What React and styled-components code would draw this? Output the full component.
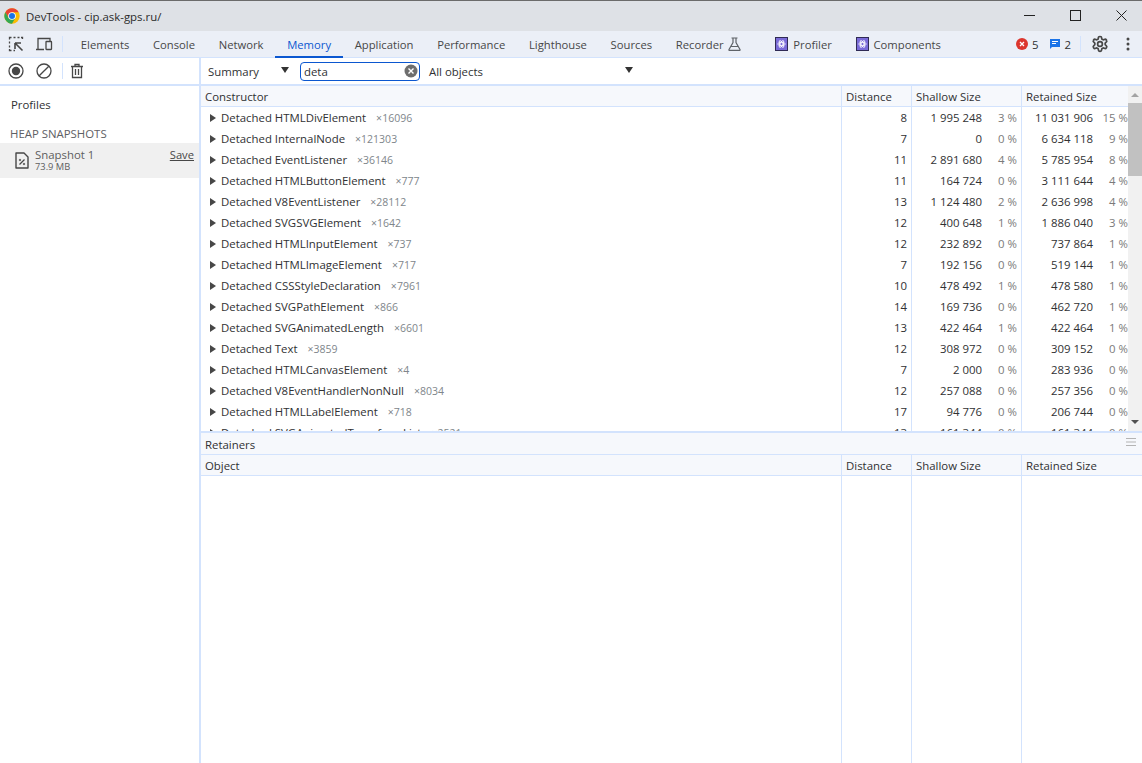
import React from 'react';
import styled, { createGlobalStyle } from 'styled-components';

const colors = {
  line: '#d3e3fd',
  chrome: '#dee1e6',
  tabs: '#ebeff7',
  head: '#f6f8fc',
  icon: '#474747',
  text: '#303133',
};

const GlobalStyle = createGlobalStyle`
  html, body, #root { margin: 0; height: 100%; }
  body {
    font-family: "Open Sans", "Noto Sans", "Liberation Sans", sans-serif;
    font-size: 11.4px;
    color: ${colors.text};
    background: #fff;
    overflow: hidden;
  }
  * { box-sizing: border-box; }
`;

const Window = styled.div`
  height: 763px;
  display: flex;
  flex-direction: column;
  border-top: 1px solid #6b6b6b;
`;

const TitleBar = styled.div`
  height: 30px;
  flex: none;
  display: flex;
  align-items: center;
  padding-left: 4px;
  background: ${colors.chrome};
  overflow: hidden;
`;
const Title = styled.div`
  margin-left: 6px;
  flex: 1;
  font-size: 11.4px;
  color: #2b2b2b;
`;
const WinButtons = styled.div`
  display: flex;
  margin-right: -2px;
`;
const WinButton = styled.div`
  width: 46px;
  height: 30px;
  padding-bottom: 2px;
  display: flex;
  align-items: center;
  justify-content: center;
`;

const TabBar = styled.div`
  height: 27px;
  flex: none;
  display: flex;
  align-items: stretch;
  background: ${colors.tabs};
  border-bottom: 1px solid ${colors.line};
`;
const ToolIcons = styled.div`
  display: flex;
  align-items: center;
  gap: 11px;
  padding-left: 8px;
  width: 62px;
`;
const Sep = styled.div`
  width: 1px;
  height: 16px;
  align-self: center;
  flex: none;
  margin: ${p => p.$margin || '0'};
  background: ${colors.line};
`;
const Tab = styled.div`
  display: flex;
  align-items: center;
  gap: ${p => p.$gap || 4}px;
  flex: none;
  padding: 1px 11.85px 0;
  margin-left: ${p => p.$offset || 0}px;
  font-size: 11.25px;
  color: ${p => (p.$active ? '#0b57d0' : colors.icon)};
  margin-bottom: -1px;
  border-bottom: 2px solid ${p => (p.$active ? '#0b57d0' : 'transparent')};
`;
const TabRight = styled.div`
  margin-left: auto;
  display: flex;
  align-items: center;
  padding-right: 6px;
`;
const Badge = styled.div`
  display: flex;
  align-items: center;
  gap: ${p => p.$inner}px;
  margin-right: ${p => p.$gap}px;
  font-size: 11.4px;
  color: #303133;
`;
const GearSlot = styled.div`
  display: flex;
  margin-right: 11px;
`;

const Main = styled.div`
  flex: 1;
  min-height: 0;
  display: flex;
`;
const Sidebar = styled.aside`
  width: 201px;
  flex: none;
  border-right: 2px solid ${colors.line};
  display: flex;
  flex-direction: column;
`;
const Toolbar = styled.div`
  height: 28px;
  flex: none;
  display: flex;
  align-items: center;
  border-bottom: 2px solid ${colors.line};
`;
const SideTools = styled(Toolbar)`
  padding-left: 8px;
`;
const RoundIcons = styled.div`
  display: flex;
  gap: 12px;
`;
const ProfilesTitle = styled.div`
  padding: 11px 0 0 11px;
  height: 40px;
`;
const GroupTitle = styled.div`
  padding-left: 10px;
  height: 17px;
  line-height: 15px;
  color: #5e6064;
`;
const Snapshot = styled.div`
  height: 35px;
  display: flex;
  align-items: center;
  padding: 0 5px 0 15px;
  background: #f0f0f0;
`;
const SnapshotText = styled.div`
  margin-left: 6px;
  flex: 1;
  color: #5e5e5e;
  line-height: 12px;
`;
const SnapshotSize = styled.div`
  margin-top: 1px;
  font-size: 9.3px;
  line-height: 10px;
`;
const Save = styled.span`
  align-self: flex-start;
  margin-top: 4px;
  color: #474747;
  text-decoration: underline;
  font-size: 11.2px;
`;

const Content = styled.section`
  flex: 1;
  min-width: 0;
  display: flex;
  flex-direction: column;
`;
const Select = styled.div`
  width: ${p => p.$width}px;
  flex: none;
  display: flex;
  align-items: center;
  justify-content: space-between;
  padding: 0 ${p => p.$pad}px 0 7px;
`;
const Arrow = styled.span`
  width: 0;
  height: 0;
  border-left: 4.5px solid transparent;
  border-right: 4.5px solid transparent;
  border-top: 6px solid #333;
  margin-bottom: 3px;
`;
const Search = styled.div`
  width: 120px;
  height: 19px;
  flex: none;
  display: flex;
  align-items: center;
  justify-content: space-between;
  margin-right: 2px;
  padding: 0 1px 0 3px;
  border: 1px solid #0b57d0;
  border-radius: 4px;
`;

const Pane = styled.div`
  height: 347px;
  flex: none;
  display: flex;
  overflow: hidden;
  border-bottom: 2px solid ${colors.line};
`;
const TableWrap = styled.div`
  flex: 1;
  min-width: 0;
`;
const Scrollbar = styled.div`
  width: 14px;
  flex: none;
  display: flex;
  flex-direction: column;
  align-items: center;
  background: #f1f1f1;
`;
const ScrollThumb = styled.div`
  width: 14px;
  height: 73px;
  flex: none;
  background: #c1c1c1;
`;
const ScrollSpace = styled.div`
  flex: 1;
`;
const ScrollArrow = styled.span`
  width: 0;
  height: 0;
  margin: ${p => (p.$up ? '7px 0 6px' : '0 0 7px')};
  border-left: 4px solid transparent;
  border-right: 4px solid transparent;
  border-${p => (p.$up ? 'bottom' : 'top')}: 4px solid ${p => (p.$up ? '#a3a3a3' : '#505050')};
`;

const columns = '640px 70px 110px 1fr';

const HeadRow = styled.div`
  display: grid;
  grid-template-columns: ${columns};
  height: 21px;
  background: ${colors.head};
  border-bottom: 1px solid ${colors.line};
`;
const HeadCell = styled.div`
  padding-left: 4px;
  line-height: 21px;
  border-left: ${p => (p.$first ? '0' : `1px solid ${colors.line}`)};
`;
const Row = styled.div`
  display: grid;
  grid-template-columns: ${columns};
  height: 21px;
  line-height: 21px;
`;
const NameCell = styled.div`
  display: flex;
  align-items: baseline;
  padding-left: 9px;
  white-space: nowrap;
`;
const Caret = styled.span`
  width: 0;
  height: 0;
  align-self: center;
  margin-right: 5px;
  border-top: 4px solid transparent;
  border-bottom: 4px solid transparent;
  border-left: 6px solid #474747;
`;
const Count = styled.span`
  margin-left: 10px;
  font-size: 10.5px;
  color: #80868b;
`;
const DistanceCell = styled.div`
  padding-right: 4px;
  text-align: right;
  border-left: 1px solid ${colors.line};
`;
const SizeCell = styled.div`
  display: flex;
  justify-content: flex-end;
  padding-right: ${p => p.$pad}px;
  border-left: 1px solid ${colors.line};
  white-space: nowrap;
`;
const Percent = styled.span`
  width: 35px;
  text-align: right;
  color: #7a7a7a;
`;

const RetainersHead = styled.div`
  height: 22px;
  flex: none;
  display: flex;
  align-items: center;
  justify-content: space-between;
  padding: 2px 6px 0 4px;
  background: ${colors.head};
  border-bottom: 1px solid ${colors.line};
`;
const MenuSlot = styled.div`
  display: flex;
  margin-bottom: 5px;
`;
const Lower = styled.div`
  flex: 1;
  min-height: 0;
  display: flex;
  flex-direction: column;
`;
const Filler = styled.div`
  flex: 1;
  display: grid;
  grid-template-columns: ${columns};
`;
const FillerCol = styled.div`
  border-left: ${p => (p.$first ? '0' : `1px solid ${colors.line}`)};
`;

const rows = [
  ['HTMLDivElement', '16096', '8', '1 995 248', '3', '11 031 906', '15'],
  ['InternalNode', '121303', '7', '0', '0', '6 634 118', '9'],
  ['EventListener', '36146', '11', '2 891 680', '4', '5 785 954', '8'],
  ['HTMLButtonElement', '777', '11', '164 724', '0', '3 111 644', '4'],
  ['V8EventListener', '28112', '13', '1 124 480', '2', '2 636 998', '4'],
  ['SVGSVGElement', '1642', '12', '400 648', '1', '1 886 040', '3'],
  ['HTMLInputElement', '737', '12', '232 892', '0', '737 864', '1'],
  ['HTMLImageElement', '717', '7', '192 156', '0', '519 144', '1'],
  ['CSSStyleDeclaration', '7961', '10', '478 492', '1', '478 580', '1'],
  ['SVGPathElement', '866', '14', '169 736', '0', '462 720', '1'],
  ['SVGAnimatedLength', '6601', '13', '422 464', '1', '422 464', '1'],
  ['Text', '3859', '12', '308 972', '0', '309 152', '0'],
  ['HTMLCanvasElement', '4', '7', '2 000', '0', '283 936', '0'],
  ['V8EventHandlerNonNull', '8034', '12', '257 088', '0', '257 356', '0'],
  ['HTMLLabelElement', '718', '17', '94 776', '0', '206 744', '0'],
  ['SVGAnimatedTransformList', '2521', '13', '161 344', '0', '161 344', '0'],
];

const ChromeLogo = () => (
  <svg width="16" height="16" viewBox="0 0 48 48">
    <circle cx="24" cy="24" r="23" fill="#fbbc04" />
    <path d="M43.9 12.5A23 23 0 0 0 4.1 12.5L14.04 29.75L24 24V12.5z" fill="#ea4335" />
    <path d="M4.1 12.5A23 23 0 0 0 24 47L33.96 29.75L24 24L14.04 29.75z" fill="#34a853" />
    <circle cx="24" cy="24" r="11.5" fill="#fff" />
    <circle cx="24" cy="24" r="9" fill="#1a73e8" />
  </svg>
);

const InspectIcon = () => (
  <svg width="16" height="16" viewBox="0 0 16 16" fill="none" stroke={colors.icon} strokeWidth="1.3">
    <path d="M1.5 3.5v-2h2M5.5 1.5h2M9.5 1.5h2M13 1.5h1.5V3M1.5 5.5v2M1.5 9.5v2M1.5 13v1.5h2M5.5 14.5H7" />
    <path d="M7 7h6M7 7v6M7 7l7.5 7.5" strokeWidth="1.6" />
  </svg>
);

const DeviceIcon = () => (
  <svg width="18" height="16" viewBox="0 0 18 16" fill="none" stroke={colors.icon} strokeWidth="1.3">
    <path d="M1 13.5h8M3 13V2.5h12V5" />
    <rect x="11" y="5.5" width="5.5" height="8" rx="0.5" />
  </svg>
);

const RecordIcon = () => (
  <svg width="16" height="16" viewBox="0 0 16 16">
    <circle cx="8" cy="8" r="7" fill="none" stroke={colors.icon} strokeWidth="1.3" />
    <circle cx="8" cy="8" r="4.2" fill={colors.icon} />
  </svg>
);

const ClearIcon = () => (
  <svg width="16" height="16" viewBox="0 0 16 16" fill="none" stroke={colors.icon} strokeWidth="1.3">
    <circle cx="8" cy="8" r="7" />
    <path d="M3.2 12.8L12.8 3.2" />
  </svg>
);

const TrashIcon = () => (
  <svg width="14" height="16" viewBox="0 0 14 16" fill="none" stroke={colors.icon} strokeWidth="1.3">
    <path d="M1 3.5h12M5 3.5v-2h4v2M2.5 3.5v11h9v-11M5.5 6v6M8.5 6v6" />
  </svg>
);

const FileIcon = () => (
  <svg width="14" height="17" viewBox="0 0 14 17" fill="none" stroke="#474747" strokeWidth="1.4">
    <path d="M1 1h8l4 4v11H1z" strokeLinejoin="round" />
    <path d="M4.5 12.5l5-5" strokeWidth="1.2" />
    <circle cx="5" cy="8" r="0.8" fill="#474747" strokeWidth="0.6" />
    <circle cx="9" cy="12" r="0.8" fill="#474747" strokeWidth="0.6" />
  </svg>
);

const FlaskIcon = () => (
  <svg width="13" height="14" viewBox="0 0 13 14" fill="none" stroke="#5f6368" strokeWidth="1.2">
    <path d="M3.5 1h6M5 1v4.5L1 12.5a.6.6 0 0 0 .5.9h10a.6.6 0 0 0 .5-.9L8 5.5V1M3 9.5h7" />
  </svg>
);

const ReactTabIcon = () => (
  <svg width="13" height="14" viewBox="0 0 13 14">
    <rect x="0.5" y="0.5" width="12" height="13" fill="#7a6bd8" stroke="#2f2a55" />
    <g fill="none" stroke="#fff" strokeWidth="0.8">
      <ellipse cx="6.5" cy="7" rx="3.8" ry="1.5" />
      <ellipse cx="6.5" cy="7" rx="3.8" ry="1.5" transform="rotate(60 6.5 7)" />
      <ellipse cx="6.5" cy="7" rx="3.8" ry="1.5" transform="rotate(120 6.5 7)" />
    </g>
  </svg>
);

const ErrorIcon = () => (
  <svg width="12" height="12" viewBox="0 0 12 12">
    <circle cx="6" cy="6" r="6" fill="#dc362e" />
    <path d="M4 4l4 4M8 4l-4 4" stroke="#fff" strokeWidth="1.3" />
  </svg>
);

const MessageIcon = () => (
  <svg width="12" height="12" viewBox="0 0 12 12">
    <path d="M1 1h10v8H3l-2 2z" fill="#1a73e8" />
    <path d="M3 3.5h6M3 5.5h4" stroke="#fff" strokeWidth="1" />
  </svg>
);

const GearIcon = () => (
  <svg width="18" height="18" viewBox="0 0 24 24" fill="none" stroke={colors.icon} strokeWidth="2.3">
    <path d="M12.2 2h-.4a2 2 0 0 0-2 2v.2a2 2 0 0 1-1 1.7l-.4.2a2 2 0 0 1-2 0l-.2-.1a2 2 0 0 0-2.7.7l-.2.4a2 2 0 0 0 .7 2.7l.2.1a2 2 0 0 1 1 1.7v.5a2 2 0 0 1-1 1.7l-.2.1a2 2 0 0 0-.7 2.7l.2.4a2 2 0 0 0 2.7.7l.2-.1a2 2 0 0 1 2 0l.4.2a2 2 0 0 1 1 1.7v.2a2 2 0 0 0 2 2h.4a2 2 0 0 0 2-2v-.2a2 2 0 0 1 1-1.7l.4-.2a2 2 0 0 1 2 0l.2.1a2 2 0 0 0 2.7-.7l.2-.4a2 2 0 0 0-.7-2.7l-.2-.1a2 2 0 0 1-1-1.7v-.5a2 2 0 0 1 1-1.7l.2-.1a2 2 0 0 0 .7-2.7l-.2-.4a2 2 0 0 0-2.7-.7l-.2.1a2 2 0 0 1-2 0l-.4-.2a2 2 0 0 1-1-1.7V4a2 2 0 0 0-2-2z" />
    <circle cx="12" cy="12" r="3.2" />
  </svg>
);

const DotsIcon = () => (
  <svg width="16" height="16" viewBox="0 0 16 16" fill={colors.icon}>
    <circle cx="8" cy="3" r="1.5" />
    <circle cx="8" cy="8" r="1.5" />
    <circle cx="8" cy="13" r="1.5" />
  </svg>
);

const ClearSearchIcon = () => (
  <svg width="14" height="14" viewBox="0 0 14 14">
    <circle cx="7" cy="7" r="6.5" fill="#6e6e6e" />
    <path d="M4.5 4.5l5 5M9.5 4.5l-5 5" stroke="#fff" strokeWidth="1.4" />
  </svg>
);

const HamburgerIcon = () => (
  <svg width="10" height="8" viewBox="0 0 10 8" stroke="#b4b4b4" strokeWidth="1">
    <path d="M0 .5h10M0 4h10M0 7.5h10" />
  </svg>
);

const MinimizeIcon = () => (
  <svg width="11" height="11" viewBox="0 0 11 11" stroke="#222"><path d="M0 5.5h11" /></svg>
);
const MaximizeIcon = () => (
  <svg width="11" height="11" viewBox="0 0 11 11" fill="none" stroke="#222"><rect x="0.5" y="0.5" width="10" height="10" /></svg>
);
const CloseIcon = () => (
  <svg width="11" height="11" viewBox="0 0 11 11" stroke="#222"><path d="M.5.5l10 10M10.5.5l-10 10" /></svg>
);

const tabs = ['Elements', 'Console', 'Network', 'Memory', 'Application', 'Performance', 'Lighthouse', 'Sources'];

const App = () => (
  <Window>
    <GlobalStyle />
    <TitleBar>
      <ChromeLogo />
      <Title>DevTools - cip.ask-gps.ru/</Title>
      <WinButtons>
        <WinButton><MinimizeIcon /></WinButton>
        <WinButton><MaximizeIcon /></WinButton>
        <WinButton><CloseIcon /></WinButton>
      </WinButtons>
    </TitleBar>

    <TabBar>
      <ToolIcons>
        <InspectIcon />
        <DeviceIcon />
      </ToolIcons>
      <Sep $margin="0 6px 0 0" />
      {tabs.map(name => (
        <Tab key={name} $active={name === 'Memory'}>{name}</Tab>
      ))}
      <Tab>Recorder <FlaskIcon /></Tab>
      <Tab $offset={11} $gap={5}><ReactTabIcon /> Profiler</Tab>
      <Tab $gap={5}><ReactTabIcon /> Components</Tab>
      <TabRight>
        <Badge $gap={11} $inner={4}><ErrorIcon /> 5</Badge>
        <Badge $gap={9} $inner={3}><MessageIcon /> 2</Badge>
        <Sep $margin="0 10px 0 0" />
        <GearSlot><GearIcon /></GearSlot>
        <DotsIcon />
      </TabRight>
    </TabBar>

    <Main>
      <Sidebar>
        <SideTools>
          <RoundIcons>
            <RecordIcon />
            <ClearIcon />
          </RoundIcons>
          <Sep $margin="0 7px 0 10px" />
          <TrashIcon />
        </SideTools>
        <ProfilesTitle>Profiles</ProfilesTitle>
        <GroupTitle>HEAP SNAPSHOTS</GroupTitle>
        <Snapshot>
          <FileIcon />
          <SnapshotText>
            Snapshot 1
            <SnapshotSize>73.9 MB</SnapshotSize>
          </SnapshotText>
          <Save>Save</Save>
        </Snapshot>
      </Sidebar>

      <Content>
        <Toolbar>
          <Select $width={99} $pad={11}>Summary <Arrow /></Select>
          <Search>deta <ClearSearchIcon /></Search>
          <Select $width={215} $pad={4}>All objects <Arrow /></Select>
        </Toolbar>

        <Pane>
          <TableWrap>
            <HeadRow>
              <HeadCell $first>Constructor</HeadCell>
              <HeadCell>Distance</HeadCell>
              <HeadCell>Shallow Size</HeadCell>
              <HeadCell>Retained Size</HeadCell>
            </HeadRow>
            {rows.map(([name, count, distance, shallow, shallowPct, retained, retainedPct]) => (
              <Row key={name}>
                <NameCell>
                  <Caret />
                  Detached {name}
                  <Count>×{count}</Count>
                </NameCell>
                <DistanceCell>{distance}</DistanceCell>
                <SizeCell $pad={4}>
                  {shallow}
                  <Percent>{shallowPct} %</Percent>
                </SizeCell>
                <SizeCell $pad={0}>
                  {retained}
                  <Percent>{retainedPct} %</Percent>
                </SizeCell>
              </Row>
            ))}
          </TableWrap>
          <Scrollbar>
            <ScrollArrow $up />
            <ScrollThumb />
            <ScrollSpace />
            <ScrollArrow />
          </Scrollbar>
        </Pane>

        <Lower>
          <RetainersHead>
            Retainers
            <MenuSlot><HamburgerIcon /></MenuSlot>
          </RetainersHead>
          <HeadRow>
            <HeadCell $first>Object</HeadCell>
            <HeadCell>Distance</HeadCell>
            <HeadCell>Shallow Size</HeadCell>
            <HeadCell>Retained Size</HeadCell>
          </HeadRow>
          <Filler>
            <FillerCol $first />
            <FillerCol />
            <FillerCol />
            <FillerCol />
          </Filler>
        </Lower>
      </Content>
    </Main>
  </Window>
);

export default App;
